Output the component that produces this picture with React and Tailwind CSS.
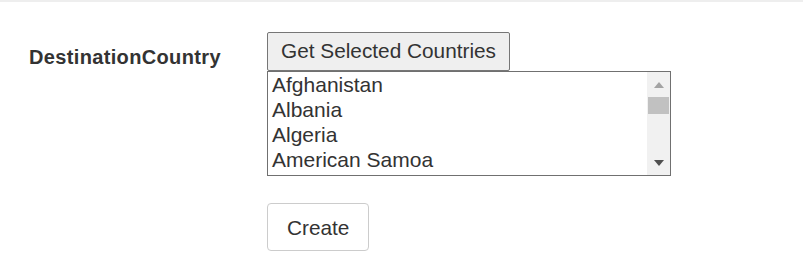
export default function App() {
  const countries = ["Afghanistan", "Albania", "Algeria", "American Samoa"];
  return (
    <div className="min-h-[273px] bg-white border-t-2 border-[#eeeeee] font-['Liberation_Sans',Arial,sans-serif] text-[#333333]">
      <div className="flex pt-[30px]">
        <div className="w-[267px] shrink-0 pl-[29px] pt-[14px] font-bold text-[20px] leading-[23px] tracking-[0.35px]">
          DestinationCountry
        </div>
        <div className="flex flex-col items-start">
          <button className="bg-[#efefef] border border-[#767676] rounded-[2px] px-[13px] pt-[6px] pb-[8px] text-[20.8px] leading-[23px] text-[#333333] whitespace-nowrap">
            Get Selected Countries
          </button>
          <div className="flex w-[404px] h-[105px] border border-[#707070] bg-white overflow-hidden">
            <div className="flex-1 pl-[4px] text-[21px] leading-[25px] text-[#333333]">
              {countries.map((c) => (
                <div key={c} className="whitespace-nowrap h-[25px]">{c}</div>
              ))}
            </div>
            <div className="w-[23px] shrink-0 bg-[#f1f1f1] flex flex-col">
              <div className="h-[25px] flex items-center justify-center">
                <svg width="10" height="6" viewBox="0 0 10 6">
                  <polygon points="5,0 10,6 0,6" fill="#a3a3a3" />
                </svg>
              </div>
              <div className="h-[17px] mx-[1px] bg-[#c1c1c1]" />
              <div className="flex-1" />
              <div className="h-[25px] flex items-center justify-center">
                <svg width="10" height="6" viewBox="0 0 10 6">
                  <polygon points="0,0 10,0 5,6" fill="#505050" />
                </svg>
              </div>
            </div>
          </div>
          <button className="mt-[27px] h-[48px] px-[19px] bg-white border border-[#cccccc] rounded-[4px] text-[20.8px] leading-[23px] text-[#333333]">
            Create
          </button>
        </div>
      </div>
    </div>
  );
}
